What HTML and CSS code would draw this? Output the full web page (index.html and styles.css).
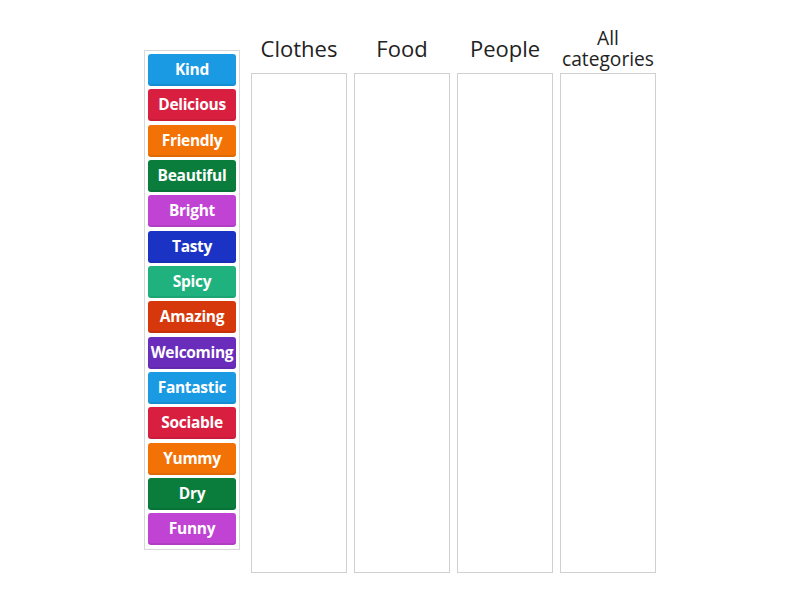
FILE: index.html
```html
<!DOCTYPE html>
<html>
<head>
<meta charset="utf-8">
<link rel="stylesheet" href="styles.css">
</head>
<body>
<div class="board">
  <div class="bank">
    <div class="tile c-blue">Kind</div>
    <div class="tile c-red">Delicious</div>
    <div class="tile c-orange">Friendly</div>
    <div class="tile c-green">Beautiful</div>
    <div class="tile c-pink">Bright</div>
    <div class="tile c-navy">Tasty</div>
    <div class="tile c-teal">Spicy</div>
    <div class="tile c-rust">Amazing</div>
    <div class="tile c-purple">Welcoming</div>
    <div class="tile c-blue">Fantastic</div>
    <div class="tile c-red">Sociable</div>
    <div class="tile c-orange">Yummy</div>
    <div class="tile c-green">Dry</div>
    <div class="tile c-pink">Funny</div>
  </div>
  <div class="cols">
    <div class="col">
      <div class="head">Clothes</div>
      <div class="drop"></div>
    </div>
    <div class="col">
      <div class="head">Food</div>
      <div class="drop"></div>
    </div>
    <div class="col">
      <div class="head">People</div>
      <div class="drop"></div>
    </div>
    <div class="col">
      <div class="head head-small">All<br>categories</div>
      <div class="drop"></div>
    </div>
  </div>
</div>
</body>
</html>
```

FILE: styles.css
```css
html, body {
  margin: 0;
  padding: 0;
  background: #fff;
  font-family: "Open Sans", "Liberation Sans", sans-serif;
}

.board {
  display: flex;
  justify-content: center;
  align-items: flex-start;
  gap: 11px;
  width: 800px;
  height: 600px;
}

.bank {
  margin-top: 50px;
  width: 88px;
  padding: 3px 3px 4px;
  border: 1px solid #d8d8d8;
  display: flex;
  flex-direction: column;
  gap: 3.35px;
}

.tile {
  height: 32px;
  padding-bottom: 2px;
  box-sizing: border-box;
  border-radius: 3px;
  color: #fff;
  font-weight: 700;
  font-size: 15.5px;
  display: flex;
  align-items: center;
  justify-content: center;
  letter-spacing: -0.3px;
  white-space: nowrap;
  box-shadow: inset 0 -2px 0 rgba(0,0,0,0.08);
}

.c-blue { background: #1a9ae3; }
.c-red { background: #d91f3f; }
.c-orange { background: #f27206; }
.c-green { background: #0a7d3c; }
.c-pink { background: #c043d3; }
.c-navy { background: #1a33c4; }
.c-teal { background: #1fb27e; }
.c-rust { background: #d7380b; }
.c-purple { background: #6a2dbb; }

.cols {
  display: flex;
  gap: 7px;
  margin-top: 27px;
}

.col {
  width: 96px;
  display: flex;
  flex-direction: column;
}

.head {
  height: 46px;
  display: flex;
  align-items: center;
  justify-content: center;
  text-align: center;
  font-size: 22px;
  line-height: 22px;
  color: #222;
  padding-bottom: 4px;
  box-sizing: border-box;
  white-space: nowrap;
}

.head-small {
  font-size: 19.2px;
  line-height: 21px;
}

.drop {
  height: 500px;
  border: 1px solid #d0d0d0;
  box-sizing: border-box;
}
```
